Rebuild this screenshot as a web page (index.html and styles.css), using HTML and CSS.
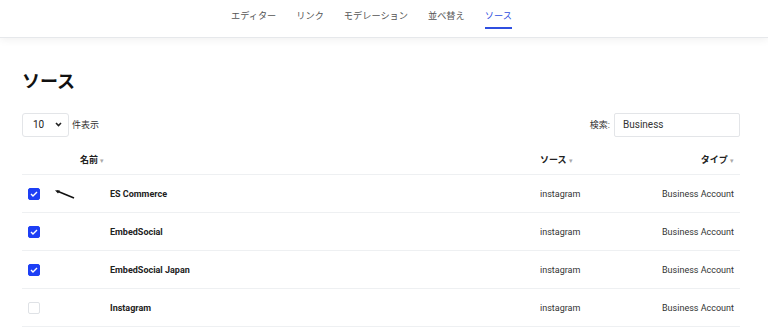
FILE: index.html
```html
<!DOCTYPE html>
<html lang="ja">
<head>
<meta charset="utf-8">
<link rel="stylesheet" href="styles.css">
</head>
<body>
<nav class="topnav">
  <span class="nav-item">エディター</span>
  <span class="nav-item">リンク</span>
  <span class="nav-item">モデレーション</span>
  <span class="nav-item">並べ替え</span>
  <span class="nav-item active">ソース</span>
</nav>
<main class="page">
  <h1 class="title">ソース</h1>
  <div class="controls">
    <div class="length">
      <div class="select"><span>10</span>
        <svg class="chev" width="7" height="5" viewBox="0 0 7 5"><path d="M1 1l2.5 2.5L6 1" fill="none" stroke="#222" stroke-width="1.6"/></svg>
      </div>
      <span class="label">件表示</span>
    </div>
    <div class="search">
      <span class="label">検索:</span>
      <div class="input">Business</div>
    </div>
  </div>
  <div class="table">
    <div class="row head">
      <div class="c-check"></div>
      <div class="c-arrow"></div>
      <div class="c-name">名前 <span class="caret">▾</span></div>
      <div class="c-src">ソース <span class="caret">▾</span></div>
      <div class="c-type">タイプ <span class="caret">▾</span></div>
    </div>
    <div class="row">
      <div class="c-check"><span class="cb on"><svg width="8" height="6" viewBox="0 0 8 6"><path d="M1 3l2 2 4-4" fill="none" stroke="#fff" stroke-width="1.4"/></svg></span></div>
      <div class="c-arrow"><svg width="22" height="10" viewBox="0 0 22 10"><path d="M20 9L3 2" stroke="#111" stroke-width="1.6" fill="none"/><path d="M1 1.2l5 0.2-2 3.2z" fill="#111"/></svg></div>
      <div class="c-name strong">ES Commerce</div>
      <div class="c-src">instagram</div>
      <div class="c-type">Business Account</div>
    </div>
    <div class="row">
      <div class="c-check"><span class="cb on"><svg width="8" height="6" viewBox="0 0 8 6"><path d="M1 3l2 2 4-4" fill="none" stroke="#fff" stroke-width="1.4"/></svg></span></div>
      <div class="c-arrow"></div>
      <div class="c-name strong">EmbedSocial</div>
      <div class="c-src">instagram</div>
      <div class="c-type">Business Account</div>
    </div>
    <div class="row">
      <div class="c-check"><span class="cb on"><svg width="8" height="6" viewBox="0 0 8 6"><path d="M1 3l2 2 4-4" fill="none" stroke="#fff" stroke-width="1.4"/></svg></span></div>
      <div class="c-arrow"></div>
      <div class="c-name strong">EmbedSocial Japan</div>
      <div class="c-src">instagram</div>
      <div class="c-type">Business Account</div>
    </div>
    <div class="row">
      <div class="c-check"><span class="cb"></span></div>
      <div class="c-arrow"></div>
      <div class="c-name strong">Instagram</div>
      <div class="c-src">instagram</div>
      <div class="c-type">Business Account</div>
    </div>
  </div>
</main>
</body>
</html>
```
FILE: styles.css
```css
* { box-sizing: border-box; }
html, body { margin: 0; padding: 0; background: #fff; }
body {
  font-family: Roboto, "Noto Sans CJK JP", sans-serif;
  color: #333;
  width: 768px;
  height: 329px;
  overflow: hidden;
}
.topnav {
  height: 38px;
  display: flex;
  align-items: flex-start;
  gap: 20px;
  padding-left: 231px;
  background: #fff;
  border-bottom: 1px solid #e6e8eb;
  box-shadow: 0 2px 8px rgba(0,0,0,0.06);
}
.nav-item {
  font-size: 9.2px;
  line-height: 12px;
  color: #555;
  padding-top: 10px;
  height: 29px;
  border-bottom: 2px solid transparent;
}
.nav-item.active {
  color: #2f4fe0;
  border-bottom-color: #2f4fe0;
}
.page { padding: 0 28px 0 22px; }
.title {
  margin: 32px 0 0;
  font-size: 18px;
  line-height: 24px;
  font-weight: 700;
  color: #111;
}
.controls {
  margin-top: 18px;
  display: flex;
  justify-content: space-between;
  align-items: center;
  height: 25px;
}
.length, .search { display: flex; align-items: center; gap: 3px; }
.select {
  width: 47px;
  height: 24px;
  border: 1px solid #e3e5e8;
  border-radius: 3px;
  display: flex;
  align-items: center;
  justify-content: space-between;
  padding: 0 6px 0 10px;
  font-size: 10px;
  color: #222;
}
.label { font-size: 9px; color: #333; }
.search { gap: 4px; }
.input {
  width: 126px;
  height: 24px;
  border: 1px solid #e3e5e8;
  border-radius: 2px;
  font-size: 10px;
  color: #333;
  padding: 0 8px;
  display: flex;
  align-items: center;
}
.table { margin-top: 10px; }
.row {
  display: flex;
  align-items: center;
  height: 38px;
  border-bottom: 1px solid #eef0f2;
  font-size: 9px;
  color: #333;
}
.row.head { height: 28px; padding-bottom: 3px; font-weight: 700; color: #222; }
.c-check { width: 32px; padding-left: 6px; display: flex; align-items: center; }
.c-arrow { width: 56px; display: flex; align-items: center; }
.head .c-arrow { width: 26px; }
.head .c-name { width: 460px; }
.c-name { width: 430px; }
.strong { font-weight: 700; color: #222; }
.c-src { width: 70px; }
.c-type { flex: 1; text-align: right; padding-right: 6px; }
.caret { color: #aaa; font-size: 7px; font-weight: 400; }
.cb {
  width: 12px; height: 12px;
  border-radius: 2px;
  border: 1px solid #dfe2e6;
  background: #fff;
  display: flex; align-items: center; justify-content: center;
}
.cb.on { background: #1d3ff5; border-color: #1d3ff5; }
```
